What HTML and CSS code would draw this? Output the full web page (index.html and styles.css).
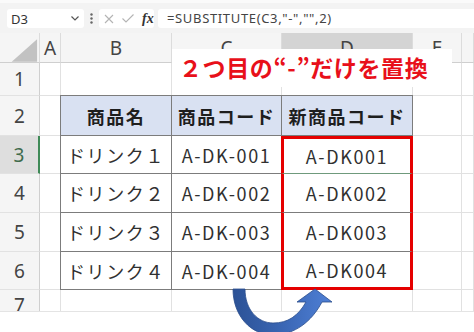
FILE: index.html
```html
<!DOCTYPE html>
<html lang="ja">
<head>
<meta charset="utf-8">
<link rel="stylesheet" href="styles.css">
</head>
<body>
<div class="app">
  <div class="fbar">
    <div class="namebox">
      <span>D3</span>
      <svg class="chev" width="8" height="5" viewBox="0 0 8 5"><polyline points="0.5,0.5 4,4 7.5,0.5" fill="none" stroke="#555" stroke-width="1.2"/></svg>
    </div>
    <svg class="dots" width="3" height="11" viewBox="0 0 3 11"><circle cx="1.5" cy="1.5" r="1.2" fill="#666"/><circle cx="1.5" cy="5.5" r="1.2" fill="#666"/><circle cx="1.5" cy="9.5" r="1.2" fill="#666"/></svg>
    <div class="fxbox">
      <svg width="10" height="10" viewBox="0 0 10 10"><path d="M1 1L9 9M9 1L1 9" stroke="#b4b4b4" stroke-width="1.1"/></svg>
      <svg width="12" height="9" viewBox="0 0 12 9"><path d="M0.5 4.5L4 8L11.5 0.5" fill="none" stroke="#b4b4b4" stroke-width="1.1"/></svg>
      <span class="fx">fx</span>
    </div>
    <div class="formula">=SUBSTITUTE(C3,"-","",2)</div>
  </div>

  <div class="sheet">
    <div class="ch corner"><svg width="40" height="30" viewBox="0 0 40 30"><polygon points="12,29 38,29 38,6" fill="#c2c2c2"/></svg></div>
    <div class="ch">A</div><div class="ch">B</div><div class="ch">C</div><div class="ch sel">D</div><div class="ch">E</div><div class="ch"></div>

    <div class="rh">1</div><div class="c"></div><div class="c"></div><div class="c"></div><div class="c"></div><div class="c"></div><div class="c"></div>

    <div class="rh">2</div><div class="c"></div>
    <div class="c t th tl">商品名</div><div class="c t th">商品コード</div><div class="c t th">新商品コード</div>
    <div class="c"></div><div class="c"></div>

    <div class="rh sel">3</div><div class="c"></div>
    <div class="c t tl name">ドリンク１</div><div class="c t">A-DK-001</div><div class="c t red rt cur">A-DK001</div>
    <div class="c"></div><div class="c"></div>

    <div class="rh">4</div><div class="c"></div>
    <div class="c t tl name">ドリンク２</div><div class="c t">A-DK-002</div><div class="c t red">A-DK002</div>
    <div class="c"></div><div class="c"></div>

    <div class="rh">5</div><div class="c"></div>
    <div class="c t tl name">ドリンク３</div><div class="c t">A-DK-003</div><div class="c t red">A-DK003</div>
    <div class="c"></div><div class="c"></div>

    <div class="rh">6</div><div class="c"></div>
    <div class="c t tl name">ドリンク４</div><div class="c t">A-DK-004</div><div class="c t red rb">A-DK004</div>
    <div class="c"></div><div class="c"></div>

    <div class="rh">7</div><div class="c"></div><div class="c"></div><div class="c"></div><div class="c"></div><div class="c"></div><div class="c"></div>
  </div>

  <div class="title">２つ目の“-”だけを置換</div>

  <svg class="arrow" width="115" height="47" viewBox="225 285 115 47">
    <defs>
      <linearGradient id="ag" x1="0" y1="0" x2="1" y2="0">
        <stop offset="0" stop-color="#2c5296"/>
        <stop offset="0.5" stop-color="#3a66b4"/>
        <stop offset="1" stop-color="#4f80d6"/>
      </linearGradient>
    </defs>
    <path d="M233,289 C233,316 251,335 273,335 C295,335 312,321 322,302 L332,302 L315,289 L297,302 L306,302 C298,316 288,323 273,323 C258,323 245,310 245,289 Z" fill="url(#ag)" stroke="#2a4c8c" stroke-width="0.8"/>
  </svg>
</div>
</body>
</html>
```

FILE: styles.css
```css
html, body {
  margin: 0;
  padding: 0;
  background: #fff;
}

.app {
  position: relative;
  width: 474px;
  height: 332px;
  overflow: hidden;
  background: #fff;
  font-family: "Noto Sans", "Noto Sans CJK JP", sans-serif;
}

/* formula bar */
.fbar {
  height: 33px;
  box-sizing: border-box;
  background: #f3f3f3;
  border-top: 3px solid #fafafa;
  display: flex;
  align-items: flex-start;
  padding: 6px 0 0 7px;
}

.namebox {
  width: 77px;
  height: 19px;
  box-sizing: border-box;
  background: #fff;
  border-radius: 3px;
  display: flex;
  align-items: center;
  justify-content: space-between;
  padding: 0 5px 0 4px;
  font-family: "Noto Sans", sans-serif;
  font-size: 13px;
  color: #333;
}

.dots {
  margin: 4px 6px 0 6px;
}

.fxbox {
  width: 55px;
  height: 19px;
  box-sizing: border-box;
  background: #fff;
  border-radius: 3px;
  display: flex;
  align-items: center;
  gap: 8px;
  padding-left: 5px;
}

.fx {
  font-family: "Liberation Serif", serif;
  font-style: italic;
  font-weight: 700;
  font-size: 14px;
  color: #333;
  line-height: 19px;
}

.formula {
  flex: 1;
  margin-left: 4px;
  height: 19px;
  background: #fff;
  border-radius: 3px 0 0 3px;
  padding-left: 9px;
  font-family: "Noto Sans", sans-serif;
  font-size: 13px;
  letter-spacing: 0.65px;
  line-height: 19px;
  color: #444;
}

/* sheet grid */
.sheet {
  display: grid;
  grid-template-columns: 40px 21px 111px 110px 131px 49px 1fr;
  grid-template-rows: 30px 33px 40px 38px 39px 39px 38px 30px;
  height: 279px;
  box-sizing: border-box;
  overflow: hidden;
  border-bottom: 1px solid #e4e4e4;
}

.ch, .rh, .c {
  box-sizing: border-box;
  display: flex;
  align-items: center;
  justify-content: center;
  min-width: 0;
}

.ch {
  background: #f5f5f5;
  border-right: 1px solid #dcdcdc;
  border-bottom: 1px solid #cfcfcf;
  font-family: "Noto Sans", sans-serif;
  font-size: 19px;
  color: #444;
}

.ch.sel {
  background: #d4d4d4;
}

.corner {
  justify-content: flex-start;
  align-items: flex-start;
}

.rh {
  background: #f5f5f5;
  border-right: 1px solid #cfcfcf;
  border-bottom: 1px solid #e2e2e2;
  font-family: "Noto Sans", sans-serif;
  font-size: 19px;
  color: #444;
}

.rh.sel {
  background: #dedede;
  color: #3f6b4c;
  border-right: 2px solid #3f8a57;
}

.c {
  background: #fff;
  border-right: 1px solid #e1e1e1;
  border-bottom: 1px solid #e1e1e1;
  font-family: "Noto Sans CJK JP", sans-serif;
  font-size: 18px;
  letter-spacing: 1.6px;
  color: #303030;
  white-space: nowrap;
}

/* table */
.t {
  border-right-color: #7c7c7c;
  border-bottom-color: #7c7c7c;
}

.th {
  background: #d9e1f2;
  font-weight: 700;
  color: #1e1e1e;
  letter-spacing: 1.5px;
  border-top: 1px solid #7c7c7c;
  margin-top: -1px;
}

.tl {
  border-left: 1px solid #7c7c7c;
  margin-left: -1px;
}

.name {
  justify-content: flex-start;
  padding-left: 6px;
}

/* red highlight around D3:D6 */
.red {
  border-left: 3px solid #e50000;
  border-right: 3px solid #e50000;
  margin-left: -1px;
}

.rt {
  border-top: 3px solid #e50000;
}

.rb {
  border-bottom: 3px solid #e50000;
}

.cur {
  border-bottom-color: #6f9a7c;
}

/* callout title */
.title {
  position: absolute;
  left: 172px;
  top: 49px;
  width: 280px;
  height: 38px;
  background: #fff;
  color: #e8101a;
  font-family: "Noto Sans CJK JP", sans-serif;
  font-weight: 700;
  font-size: 23px;
  letter-spacing: 0.6px;
  line-height: 36px;
  padding-left: 7px;
  box-sizing: border-box;
  white-space: nowrap;
}

.arrow {
  position: absolute;
  left: 225px;
  top: 285px;
}
```
